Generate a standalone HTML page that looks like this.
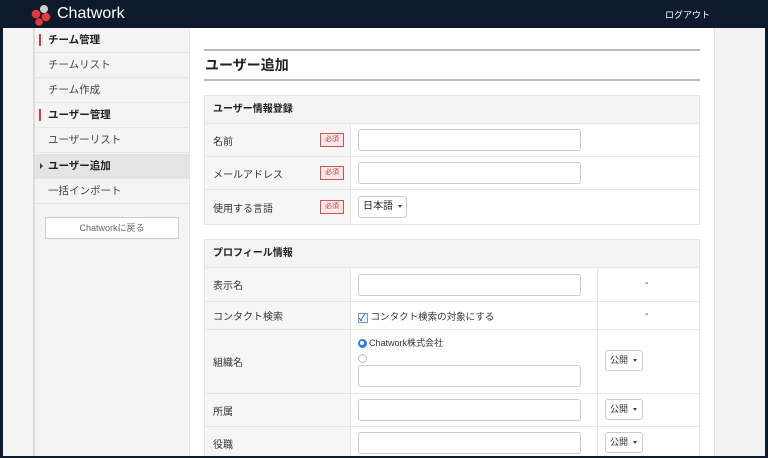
<!DOCTYPE html>
<html style="overflow:hidden;height:458px"><head><meta charset="utf-8"><style>
*{box-sizing:border-box;margin:0;padding:0}
body{width:768px;height:458px;overflow:hidden;background:#0d1a2d;font-family:"Liberation Sans","Noto Sans CJK JP",sans-serif;position:relative;color:#333}
.a{position:absolute}
.hdr{left:0;top:0;width:768px;height:28px;background:#0d1a2d}
.frame{left:3px;top:28px;width:762px;height:428px;background:#f4f4f4}
.side{left:33px;top:28px;width:157px;height:428px;background:#f4f4f4;border-left:2px solid #ddd;border-right:1px solid #e4e4e4}
.si{position:absolute;left:0;width:155px;height:25px;border-bottom:1px solid #e6e6e6;font-size:10.5px;line-height:24px;padding-left:13px;color:#444}
.si.h{font-weight:bold;color:#222}
.si.h:before{content:"";position:absolute;left:4px;top:6px;width:2px;height:12px;background:#e8383d}
.si.act{background:#e4e4e4;font-weight:bold;color:#222}
.si.act:before{content:"";position:absolute;left:5px;top:9px;border-left:3px solid #333;border-top:3px solid transparent;border-bottom:3px solid transparent}
.main{left:190px;top:28px;width:524px;height:428px;background:#fff}
.rt{left:714px;top:28px;width:51px;height:428px;background:#f2f2f2;border-left:1px solid #ddd}
.box{position:absolute;left:204px;width:496px;border:1px solid #e6e6e6;background:#fff;overflow:hidden}
.bh{height:28px;background:#f3f3f3;border-bottom:1px solid #e6e6e6;font-size:10px;font-weight:bold;line-height:28px;padding-left:8px;color:#222}
.row{position:relative;border-bottom:1px solid #e6e6e6;font-size:10px}
.row .l{position:absolute;left:0;top:0;bottom:0;width:146px;background:#f6f6f6;border-right:1px solid #e6e6e6;padding-left:8px;display:flex;align-items:center}
.inp{position:absolute;left:153px;width:223px;height:22px;border:1px solid #ccc;border-radius:3px;background:#fff}
.req{position:absolute;left:115px;width:24px;height:14px;border:1px solid #c55;background:#f8e8e8;color:#c44;font-size:7px;text-align:center;line-height:12px}
.c3{position:absolute;left:392px;top:0;bottom:0;border-left:1px solid #e6e6e6;width:102px}
.dash{position:absolute;left:47px;font-size:10px}
.pub{position:absolute;left:7px;width:38px;height:21px;border:1px solid #ccc;border-radius:3px;font-size:9px;line-height:19px;padding-left:4px;background:#fff}
.tri{display:inline-block;margin-left:5px;border-top:3px solid #444;border-left:2.5px solid transparent;border-right:2.5px solid transparent;vertical-align:middle}
</style></head><body>
<div class="a hdr"></div>
<svg class="a" style="left:31px;top:4px" width="22" height="22" viewBox="0 0 22 22"><circle cx="13" cy="5" r="4" fill="#ccc"/><circle cx="5" cy="10" r="4.3" fill="#e8383d"/><circle cx="15" cy="13" r="4.3" fill="#e8383d"/><circle cx="8" cy="18" r="3.8" fill="#e8383d"/></svg>
<div class="a" style="left:57px;top:4px;font-size:16px;color:#fff;line-height:20px">Chatwork</div>
<div class="a" style="left:665px;top:8px;font-size:9px;color:#fff">ログアウト</div>
<div class="a frame"></div>
<div class="a side">
<div class="si h" style="top:0">チーム管理</div>
<div class="si" style="top:25px">チームリスト</div>
<div class="si" style="top:50px">チーム作成</div>
<div class="si h" style="top:75px">ユーザー管理</div>
<div class="si" style="top:100px">ユーザーリスト</div>
<div class="si act" style="top:126px">ユーザー追加</div>
<div class="si" style="top:151px">一括インポート</div>
<div style="position:absolute;left:10px;top:189px;width:134px;height:22px;border:1px solid #ccc;border-radius:2px;background:#fff;font-size:9px;color:#666;text-align:center;line-height:20px">Chatworkに戻る</div>
</div>
<div class="a main"></div>
<div class="a rt"></div>
<div class="a" style="left:204px;top:49px;width:496px;height:2px;background:#bbb"></div>
<div class="a" style="left:205px;top:55px;font-size:14px;font-weight:bold;color:#222">ユーザー追加</div>
<div class="a" style="left:204px;top:79px;width:496px;height:2px;background:#bbb"></div>
<div class="box" style="top:95px">
<div class="bh">ユーザー情報登録</div>
<div class="row" style="height:33px"><div class="l">名前</div><div class="req" style="top:9px">必須</div><div class="inp" style="top:5px"></div></div>
<div class="row" style="height:33px"><div class="l">メールアドレス</div><div class="req" style="top:9px">必須</div><div class="inp" style="top:5px"></div></div>
<div class="row" style="height:34px;border-bottom:none"><div class="l">使用する言語</div><div class="req" style="top:10px">必須</div><div class="inp" style="top:6px;width:49px;font-size:10px;line-height:20px;padding-left:4px;color:#222">日本語<span class="tri"></span></div></div>
</div>
<div class="box" style="top:239px;height:217px;border-bottom:none">
<div class="bh">プロフィール情報</div>
<div class="row" style="height:34px"><div class="l">表示名</div><div class="inp" style="top:6px"></div><div class="c3"><div class="dash" style="top:10px">-</div></div></div>
<div class="row" style="height:28px"><div class="l">コンタクト検索</div><div style="position:absolute;left:153px;top:7px;font-size:9.5px"><span style="display:inline-block;width:10px;height:10px;border:1px solid #6a9fd4;background:#e8f1fb;font-size:9px;line-height:8px;vertical-align:-1px">✓</span> コンタクト検索の対象にする</div><div class="c3"><div class="dash" style="top:7px">-</div></div></div>
<div class="row" style="height:64px"><div class="l">組織名</div>
<div style="position:absolute;left:153px;top:9px;width:9px;height:9px;border-radius:50%;background:#2a7de1;border:2.5px solid #2a7de1"><div style="width:4px;height:4px;background:#fff;border-radius:50%"></div></div>
<div style="position:absolute;left:164px;top:6px;font-size:9px">Chatwork株式会社</div>
<div style="position:absolute;left:153px;top:24px;width:9px;height:9px;border-radius:50%;border:1px solid #bbb;background:#fff"></div>
<div class="inp" style="top:35px"></div><div class="c3"><div class="pub" style="top:20px">公開<span class="tri"></span></div></div></div>
<div class="row" style="height:33px"><div class="l">所属</div><div class="inp" style="top:5px"></div><div class="c3"><div class="pub" style="top:5px">公開<span class="tri"></span></div></div></div>
<div class="row" style="height:33px"><div class="l">役職</div><div class="inp" style="top:5px"></div><div class="c3"><div class="pub" style="top:5px">公開<span class="tri"></span></div></div></div>
</div>
<div class="a" style="left:0;top:456px;width:768px;height:2px;background:#0d1a2d"></div>
<div class="a" style="left:765px;top:0;width:3px;height:458px;background:#0d1a2d"></div>
<div class="a" style="left:0;top:0;width:3px;height:458px;background:#0d1a2d"></div>
</body></html>
